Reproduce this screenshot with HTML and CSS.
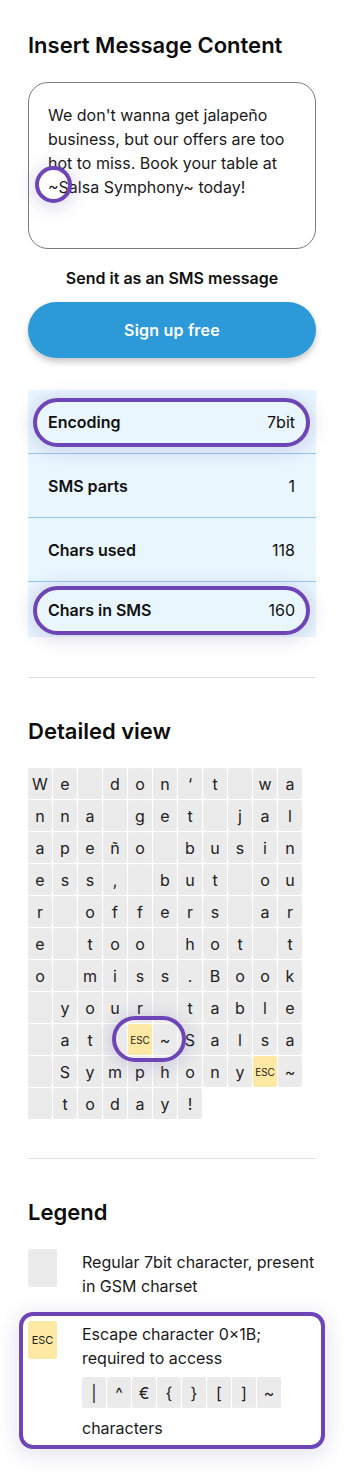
FILE: index.html
```html
<!DOCTYPE html>
<html lang="en">
<head>
<meta charset="utf-8">
<title>SMS Message Content</title>
<link rel="stylesheet" href="styles.css">
</head>
<body>
<div class="page">
  <h1 class="title">Insert Message Content</h1>
  <div class="message">We don't wanna get jalapeño business, but our offers are too hot to miss. Book your table at ~Salsa Symphony~ today!<span class="ring ring-msg"></span></div>
  <p class="send">Send it as an SMS message</p>
  <button class="cta" type="button">Sign up free</button>

  <div class="stats">
    <div class="stat"><span class="label">Encoding</span><span class="val">7bit</span><span class="ring ring-row"></span></div>
    <div class="stat"><span class="label">SMS parts</span><span class="val">1</span></div>
    <div class="stat"><span class="label">Chars used</span><span class="val">118</span></div>
    <div class="stat"><span class="label">Chars in SMS</span><span class="val">160</span><span class="ring ring-row ring-last"></span></div>
  </div>

  <hr class="sep">
  <h2 class="title sub">Detailed view</h2>
  <div class="grid">
    <span class="c">W</span><span class="c">e</span><span class="c"></span><span class="c">d</span><span class="c">o</span><span class="c">n</span><span class="c">‘</span><span class="c">t</span><span class="c"></span><span class="c">w</span><span class="c">a</span>
    <span class="c">n</span><span class="c">n</span><span class="c">a</span><span class="c"></span><span class="c">g</span><span class="c">e</span><span class="c">t</span><span class="c"></span><span class="c">j</span><span class="c">a</span><span class="c">l</span>
    <span class="c">a</span><span class="c">p</span><span class="c">e</span><span class="c">ñ</span><span class="c">o</span><span class="c"></span><span class="c">b</span><span class="c">u</span><span class="c">s</span><span class="c">i</span><span class="c">n</span>
    <span class="c">e</span><span class="c">s</span><span class="c">s</span><span class="c">,</span><span class="c"></span><span class="c">b</span><span class="c">u</span><span class="c">t</span><span class="c"></span><span class="c">o</span><span class="c">u</span>
    <span class="c">r</span><span class="c"></span><span class="c">o</span><span class="c">f</span><span class="c">f</span><span class="c">e</span><span class="c">r</span><span class="c">s</span><span class="c"></span><span class="c">a</span><span class="c">r</span>
    <span class="c">e</span><span class="c"></span><span class="c">t</span><span class="c">o</span><span class="c">o</span><span class="c"></span><span class="c">h</span><span class="c">o</span><span class="c">t</span><span class="c"></span><span class="c">t</span>
    <span class="c">o</span><span class="c"></span><span class="c">m</span><span class="c">i</span><span class="c">s</span><span class="c">s</span><span class="c">.</span><span class="c">B</span><span class="c">o</span><span class="c">o</span><span class="c">k</span>
    <span class="c"></span><span class="c">y</span><span class="c">o</span><span class="c">u</span><span class="c">r</span><span class="c"></span><span class="c">t</span><span class="c">a</span><span class="c">b</span><span class="c">l</span><span class="c">e</span>
    <span class="c"></span><span class="c">a</span><span class="c">t</span><span class="c"></span><span class="c esc">ESC</span><span class="c">~</span><span class="c">S</span><span class="c">a</span><span class="c">l</span><span class="c">s</span><span class="c">a</span>
    <span class="c"></span><span class="c">S</span><span class="c">y</span><span class="c">m</span><span class="c">p</span><span class="c">h</span><span class="c">o</span><span class="c">n</span><span class="c">y</span><span class="c esc">ESC</span><span class="c">~</span>
    <span class="c"></span><span class="c">t</span><span class="c">o</span><span class="c">d</span><span class="c">a</span><span class="c">y</span><span class="c">!</span>
    <span class="ring ring-esc"></span>
  </div>

  <hr class="sep sep2">
  <h2 class="title sub">Legend</h2>
  <div class="legend">
    <div class="item">
      <span class="sw"></span>
      <div class="desc">Regular 7bit character, present in GSM charset</div>
    </div>
    <div class="item">
      <span class="sw sw-esc">ESC</span>
      <div class="desc">
        <p class="line">Escape character 0×1B; required to access</p>
        <div class="chars"><span class="c">|</span><span class="c">^</span><span class="c">€</span><span class="c">{</span><span class="c">}</span><span class="c">[</span><span class="c">]</span><span class="c">~</span></div>
        <p class="line last">characters</p>
      </div>
      <span class="ring ring-legend"></span>
    </div>
  </div>
</div>
</body>
</html>
```

FILE: styles.css
```css
* { box-sizing: border-box; }

body {
  margin: 0;
  background: #ffffff;
  color: #111111;
  font-family: Inter, "Noto Sans", "Liberation Sans", sans-serif;
}

.page {
  padding: 31px 32px 40px 28px;
}

.title {
  margin: 0;
  font-size: 22px;
  line-height: 28px;
  font-weight: 600;
  color: #0d0d0d;
}

.sub { margin-top: 39px; }

.message {
  position: relative;
  margin-top: 23px;
  height: 167px;
  border: 1px solid #7a7a7a;
  border-radius: 20px;
  padding: 20px 19px;
  font-size: 16px;
  line-height: 24px;
  color: #1a1a1a;
}

.ring {
  position: absolute;
  border: 4px solid #6e45b6;
  box-shadow: 0 2px 16px 4px rgba(100, 90, 170, 0.18);
  pointer-events: none;
}

.ring-msg {
  left: 6px;
  top: 83px;
  width: 37px;
  height: 37px;
  border-radius: 50%;
}

.send {
  margin: 17px 0 0;
  text-align: center;
  font-size: 16px;
  line-height: 24px;
  font-weight: 600;
}

.cta {
  display: block;
  width: 100%;
  height: 56px;
  margin-top: 12px;
  border: 0;
  border-radius: 28px;
  background: #2c9ad8;
  color: #ffffff;
  font-family: Inter, "Noto Sans", sans-serif;
  font-size: 16px;
  font-weight: 600;
  letter-spacing: 0.2px;
  box-shadow: 0 4px 6px rgba(0, 0, 0, 0.22);
}

.stats {
  margin-top: 32px;
  background: #e9f6fe;
}

.stat {
  position: relative;
  display: flex;
  align-items: center;
  justify-content: space-between;
  height: 64px;
  padding: 0 21px 0 20px;
  border-bottom: 1px solid #92c8ea;
  font-size: 16px;
  line-height: 24px;
}

.stat:last-child {
  height: 55px;
  border-bottom: 0;
}

.label { font-weight: 600; }

.ring-row {
  left: 5px;
  right: 6px;
  top: 8px;
  height: 49px;
  border-radius: 25px;
}

.ring-last { top: 4px; }

.sep {
  margin: 40px 0 0;
  border: 0;
  border-top: 1px solid #e0e0e0;
  height: 0;
}

.sep2 { margin-top: 39px; }

.grid {
  position: relative;
  margin-top: 23px;
  display: grid;
  grid-template-columns: repeat(11, 24px);
  grid-auto-rows: 31px;
  column-gap: 1px;
  row-gap: 1px;
}

.c {
  display: flex;
  align-items: center;
  justify-content: center;
  background: #ebebeb;
  border-radius: 2px;
  font-size: 16px;
  color: #222222;
}

.c.esc {
  background: #fee9a4;
  font-size: 10px;
}

.ring-esc {
  left: 84px;
  top: 248px;
  width: 74px;
  height: 46px;
  border-radius: 23px;
}

.legend {
  margin-top: 23px;
  display: flex;
  flex-direction: column;
  gap: 23px;
}

.item {
  position: relative;
  display: grid;
  grid-template-columns: 54px 1fr;
  align-items: start;
}

.sw {
  width: 29px;
  height: 38px;
  border-radius: 3px;
  background: #ebebeb;
  display: flex;
  align-items: center;
  justify-content: center;
  font-size: 11px;
  color: #222;
}

.sw-esc { background: #fee9a4; }

.desc {
  margin-top: 1px;
  font-size: 16px;
  line-height: 24px;
  color: #1a1a1a;
}

.line { margin: 0; }

.line.last { margin-top: 8px; }

.chars {
  margin-top: 7px;
  display: flex;
  gap: 1px;
}

.chars .c {
  width: 24px;
  height: 31px;
}

.ring-legend {
  left: -9px;
  right: -9px;
  top: -9px;
  bottom: -9px;
  border-radius: 14px;
  box-shadow: 0 4px 18px 4px rgba(100, 90, 170, 0.14);
}
```
